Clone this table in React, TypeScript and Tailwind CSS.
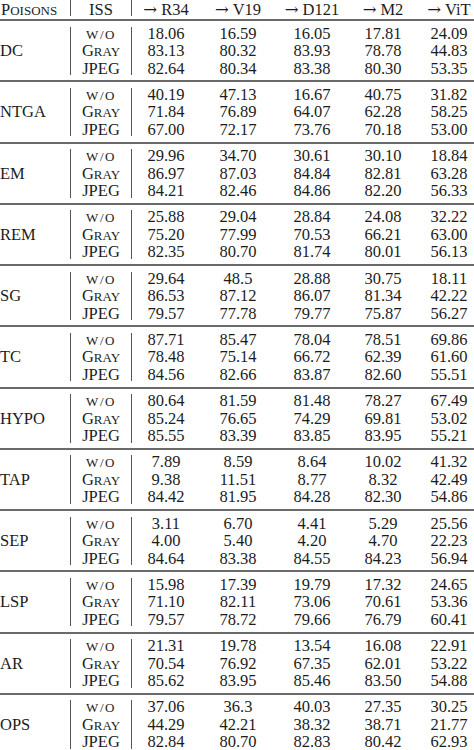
const rows: { name: string; vals: string[][] }[] = [
  { name: 'DC', vals: [['18.06', '16.59', '16.05', '17.81', '24.09'], ['83.13', '80.32', '83.93', '78.78', '44.83'], ['82.64', '80.34', '83.38', '80.30', '53.35']] },
  { name: 'NTGA', vals: [['40.19', '47.13', '16.67', '40.75', '31.82'], ['71.84', '76.89', '64.07', '62.28', '58.25'], ['67.00', '72.17', '73.76', '70.18', '53.00']] },
  { name: 'EM', vals: [['29.96', '34.70', '30.61', '30.10', '18.84'], ['86.97', '87.03', '84.84', '82.81', '63.28'], ['84.21', '82.46', '84.86', '82.20', '56.33']] },
  { name: 'REM', vals: [['25.88', '29.04', '28.84', '24.08', '32.22'], ['75.20', '77.99', '70.53', '66.21', '63.00'], ['82.35', '80.70', '81.74', '80.01', '56.13']] },
  { name: 'SG', vals: [['29.64', '48.5', '28.88', '30.75', '18.11'], ['86.53', '87.12', '86.07', '81.34', '42.22'], ['79.57', '77.78', '79.77', '75.87', '56.27']] },
  { name: 'TC', vals: [['87.71', '85.47', '78.04', '78.51', '69.86'], ['78.48', '75.14', '66.72', '62.39', '61.60'], ['84.56', '82.66', '83.87', '82.60', '55.51']] },
  { name: 'HYPO', vals: [['80.64', '81.59', '81.48', '78.27', '67.49'], ['85.24', '76.65', '74.29', '69.81', '53.02'], ['85.55', '83.39', '83.85', '83.95', '55.21']] },
  { name: 'TAP', vals: [['7.89', '8.59', '8.64', '10.02', '41.32'], ['9.38', '11.51', '8.77', '8.32', '42.49'], ['84.42', '81.95', '84.28', '82.30', '54.86']] },
  { name: 'SEP', vals: [['3.11', '6.70', '4.41', '5.29', '25.56'], ['4.00', '5.40', '4.20', '4.70', '22.23'], ['84.64', '83.38', '84.55', '84.23', '56.94']] },
  { name: 'LSP', vals: [['15.98', '17.39', '19.79', '17.32', '24.65'], ['71.10', '82.11', '73.06', '70.61', '53.36'], ['79.57', '78.72', '79.66', '76.79', '60.41']] },
  { name: 'AR', vals: [['21.31', '19.78', '13.54', '16.08', '22.91'], ['70.54', '76.92', '67.35', '62.01', '53.22'], ['85.62', '83.95', '85.46', '83.50', '54.88']] },
  { name: 'OPS', vals: [['37.06', '36.3', '40.03', '27.35', '30.25'], ['44.29', '42.21', '38.32', '38.71', '21.77'], ['82.84', '80.70', '82.83', '80.42', '62.93']] },
];

const heads = ['R34', 'V19', 'D121', 'M2', 'ViT'];
const colW = ['w-[68px]', 'w-[76px]', 'w-[72px]', 'w-[70px]', 'w-[62px]'];

// hand-made small caps, the browser's synthetic ones come out too small
function Sc({ big, small, className = '' }: { big?: string; small: string; className?: string }) {
  return (
    <span className={className}>
      {big}
      <span className="text-[13px] uppercase">{small}</span>
    </span>
  );
}

function VLine() {
  return <div className="w-px shrink-0 self-stretch bg-[#555] my-[2px]" />;
}

function Rule() {
  return <div className="h-[2px] w-full bg-[#6a6a6a]" />;
}

export default function App() {
  return (
    <div
      className="w-[474px] h-[750px] overflow-hidden bg-white text-[#1c1c1c] text-[16.5px] leading-[17.5px]"
      style={{ fontFamily: '"Liberation Serif", "DejaVu Serif", serif' }}
    >
      {/* header */}
      <div className="flex h-[19px] items-stretch">
        <div className="w-[70px] shrink-0 flex items-center pl-px pt-px">
          <Sc big="P" small="oisons" />
        </div>
        <div className="w-px shrink-0 bg-[#555] mb-[3px]" />
        <div className="w-[60px] shrink-0 flex items-center justify-center pt-px">ISS</div>
        <div className="w-px shrink-0 bg-[#555] mb-[3px]" />
        {heads.map((h, i) => (
          <div key={h} className={`${colW[i]} shrink-0 flex items-center justify-center whitespace-nowrap pt-px`}>
            <span className="mr-[4px]" style={{ fontFamily: '"DejaVu Serif", serif' }}>→</span>
            {h}
          </div>
        ))}
      </div>
      <Rule />

      {rows.map((r, gi) => (
        <div key={r.name}>
          {gi > 0 && <Rule />}
          <div className="flex pt-[3.5px] pb-[3.27px]">
            <div className="w-[70px] shrink-0 flex items-center">{r.name}</div>
            <VLine />
            <div className="w-[60px] shrink-0 flex flex-col items-center">
              <div className="h-[17.5px]">
                <Sc small="w/o" className="tracking-[1.5px]" />
              </div>
              <div className="h-[17.5px]">
                <Sc big="G" small="ray" />
              </div>
              <div className="h-[17.5px]">JPEG</div>
            </div>
            <VLine />
            {heads.map((h, ci) => (
              <div key={h} className={`${colW[ci]} shrink-0 flex flex-col items-center`}>
                {r.vals.map((v, ri) => (
                  <div key={ri} className="h-[17.5px] whitespace-nowrap">{v[ci]}</div>
                ))}
              </div>
            ))}
          </div>
        </div>
      ))}
    </div>
  );
}
